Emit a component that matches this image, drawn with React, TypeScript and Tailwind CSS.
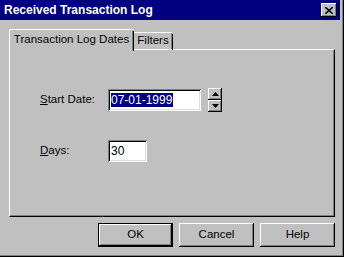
import React from "react"

const font = { fontFamily: '"Liberation Sans", Arial, sans-serif' }

function Raised({ className = "", children }: { className?: string; children?: React.ReactNode }) {
  return (
    <div
      className={
        "bg-[#c0c0c0] shadow-[inset_-1px_-1px_#000,inset_1px_1px_#fff,inset_-2px_-2px_#808080] " + className
      }
    >
      {children}
    </div>
  )
}

function Sunken({ className = "", children }: { className?: string; children?: React.ReactNode }) {
  return (
    <div
      className={
        "bg-white shadow-[inset_1px_1px_#808080,inset_-1px_-1px_#fff,inset_2px_2px_#000,inset_-2px_-2px_#dfdfdf] " +
        className
      }
    >
      {children}
    </div>
  )
}

function Button({ label, isDefault }: { label: string; isDefault?: boolean }) {
  return (
    <div
      className={
        "flex h-[24px] w-[75px] items-center justify-center bg-[#c0c0c0] text-[11.5px] text-black " +
        (isDefault
          ? "shadow-[inset_0_0_0_1px_#000,inset_-2px_-2px_#000,inset_2px_2px_#fff,inset_-3px_-3px_#808080]"
          : "shadow-[inset_-1px_-1px_#000,inset_1px_1px_#fff,inset_-2px_-2px_#808080]")
      }
    >
      {label}
    </div>
  )
}

function Arrow({ up }: { up?: boolean }) {
  return (
    <svg width="7" height="4" viewBox="0 0 7 4">
      {up ? <path d="M3.5 0 L7 4 L0 4 Z" fill="#000" /> : <path d="M0 0 L7 0 L3.5 4 Z" fill="#000" />}
    </svg>
  )
}

export default function App() {
  return (
    <div
      className="relative flex h-[257px] w-[344px] flex-col bg-[#c0c0c0] shadow-[inset_-1px_-1px_#000,inset_-2px_-2px_#808080]"
      style={font}
    >
      {/* title bar */}
      <div className="mr-[4px] flex h-[20px] items-center justify-between bg-[#000080] pl-[4px] pr-[3px]">
        <span className="text-[12px] font-bold text-white">Received Transaction Log</span>
        <Raised className="flex h-[14px] w-[16px] items-center justify-center">
          <svg width="8" height="7" viewBox="0 0 8 7">
            <path d="M0 0 L8 7 M8 0 L0 7" stroke="#000" strokeWidth="1.6" />
          </svg>
        </Raised>
      </div>

      {/* tabs */}
      <div className="ml-[9px] mt-[9px] flex h-[20px] items-end">
        <div className="relative z-10 flex h-[21px] w-[124px] items-center justify-center rounded-tl-[2px] border-l border-t border-white bg-[#c0c0c0] pb-[1px] text-[11.5px] text-black shadow-[inset_-1px_0_#808080] [margin-bottom:-1px]">
          <div className="absolute right-[-1px] top-[1px] h-[20px] w-[1px] bg-black" />
          Transaction Log Dates
        </div>
        <div className="relative flex h-[17px] w-[39px] items-center justify-center border-l border-t border-white text-[11.5px] text-black shadow-[inset_-1px_0_#808080]">
          <div className="absolute right-[-1px] top-[1px] h-[16px] w-[1px] bg-black" />
          Filters
        </div>
      </div>

      {/* panel */}
      <div className="ml-[9px] h-[168px] w-[326px] border-b border-l border-r border-t border-b-black border-l-white border-r-black border-t-white shadow-[inset_-1px_-1px_#808080]">
        <div className="ml-[30px] mt-[38px] flex items-center">
          <span className="w-[68px] text-[11.5px] text-black">
            <span className="underline">S</span>tart Date:
          </span>
          <Sunken className="flex h-[22px] w-[93px] items-center overflow-hidden pl-[3px]">
            <span className="bg-[#000080] pr-[1px] text-[12px] leading-[14px] text-white">07-01-1999</span>
          </Sunken>
          <div className="ml-[7px] flex flex-col">
            <Raised className="flex h-[12px] w-[14px] items-center justify-center">
              <Arrow up />
            </Raised>
            <Raised className="flex h-[12px] w-[14px] items-center justify-center">
              <Arrow />
            </Raised>
          </div>
        </div>
        <div className="ml-[30px] mt-[28px] flex items-center">
          <span className="w-[68px] text-[11.5px] text-black">
            <span className="underline">D</span>ays:
          </span>
          <Sunken className="flex h-[22px] w-[39px] items-center pl-[3px]">
            <span className="text-[12px] text-black">30</span>
          </Sunken>
        </div>
      </div>

      {/* buttons */}
      <div className="mt-[6px] flex gap-[6px] pl-[98px]">
        <Button label="OK" isDefault />
        <Button label="Cancel" />
        <Button label="Help" />
      </div>
    </div>
  )
}
